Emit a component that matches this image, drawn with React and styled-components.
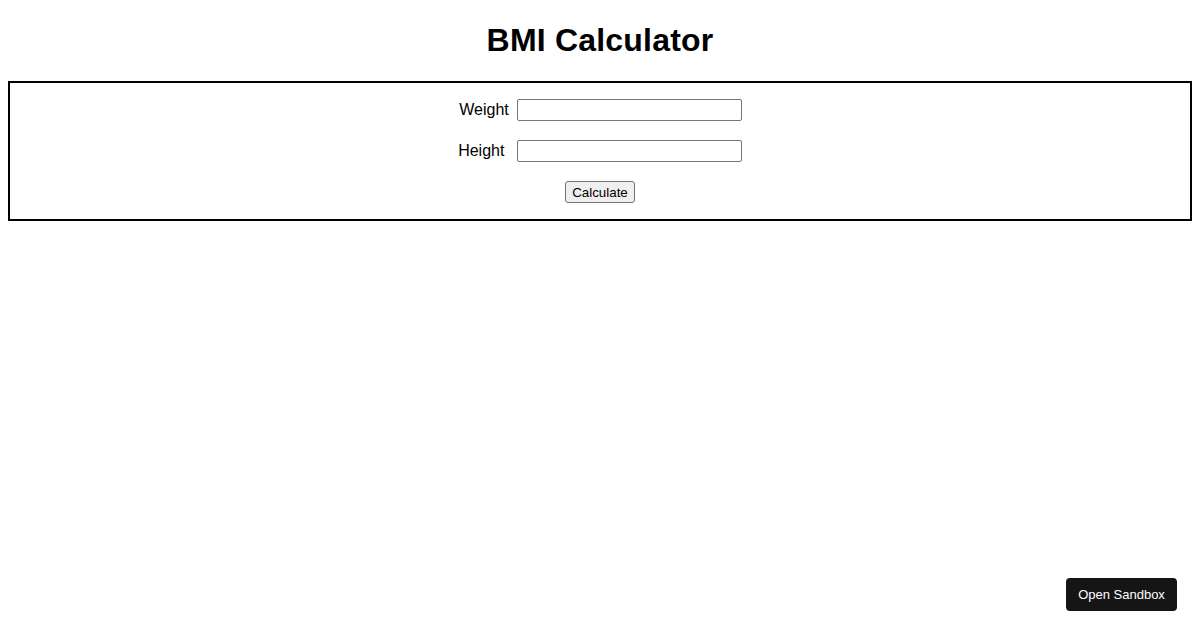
import React, { useState } from "react";
import styled, { createGlobalStyle } from "styled-components";

const GlobalStyle = createGlobalStyle`
  body {
    margin: 8px;
    background: #fff;
    color: #000;
    font-family: "Liberation Sans", Arial, sans-serif;
  }
`;

const Title = styled.h1`
  margin: 13.5px 0 22.5px;
  text-align: center;
  font-size: 32px;
  font-weight: bold;
  letter-spacing: 0.2px;
`;

const Form = styled.form`
  display: flex;
  flex-direction: column;
  align-items: center;
  gap: 19px;
  padding: 16px 0;
  border: 2px solid #000;
`;

const Row = styled.div`
  display: flex;
  align-items: center;
  gap: 8px;
  height: 22px;
  padding-left: ${(p) => (p.$shift ? "1px" : "0")};
`;

const Label = styled.label`
  font-size: 16px;
  white-space: pre;
`;

const Input = styled.input`
  box-sizing: border-box;
  width: 225px;
  height: 22px;
  padding: 1px 2px;
  border: 1px solid #767676;
  border-radius: 2px;
  font: 13.33px "Liberation Sans", Arial, sans-serif;
`;

const Button = styled.button`
  box-sizing: border-box;
  height: 22px;
  padding: 1px 6px;
  background: #efefef;
  border: 1px solid #767676;
  border-radius: 3px;
  color: #000;
  font: 13.33px "Liberation Sans", Arial, sans-serif;
`;

const SandboxLink = styled.a`
  position: fixed;
  right: 23px;
  bottom: 19px;
  box-sizing: border-box;
  width: 111px;
  height: 33px;
  display: flex;
  align-items: center;
  justify-content: center;
  background: #151515;
  color: #fff;
  border-radius: 4px;
  font-size: 13px;
  text-decoration: none;
`;

export default function App() {
  const [weight, setWeight] = useState("");
  const [height, setHeight] = useState("");

  return (
    <>
      <GlobalStyle />
      <Title>BMI Calculator</Title>
      <Form onSubmit={(e) => e.preventDefault()}>
        <Row $shift>
          <Label htmlFor="weight">Weight</Label>
          <Input id="weight" value={weight} onChange={(e) => setWeight(e.target.value)} />
        </Row>
        <Row>
          <Label htmlFor="height">{"Height\u00a0"}</Label>
          <Input id="height" value={height} onChange={(e) => setHeight(e.target.value)} />
        </Row>
        <Row>
          <Button type="submit">Calculate</Button>
        </Row>
      </Form>
      <SandboxLink href="#">Open Sandbox</SandboxLink>
    </>
  );
}
